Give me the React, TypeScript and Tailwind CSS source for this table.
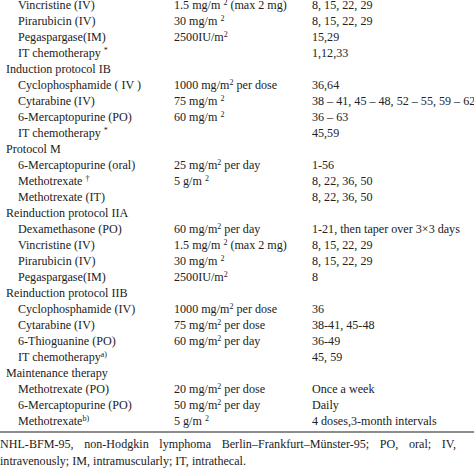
import type { ReactNode } from "react";

type Row =
  | { kind: "head"; label: string }
  | { kind: "drug"; name: ReactNode; dose?: ReactNode; days?: string };

const Sup = ({ children }: { children: ReactNode }) => (
  <sup className="text-[8px]">{children}</sup>
);

const m2 = (pre: string, post = "") => (
  <>
    {pre}
    <Sup>2</Sup>
    {post}
  </>
);

const rows: Row[] = [
  { kind: "drug", name: "Vincristine (IV)", dose: m2("1.5 mg/m ", " (max 2 mg)"), days: "8, 15, 22, 29" },
  { kind: "drug", name: "Pirarubicin (IV)", dose: m2("30 mg/m "), days: "8, 15, 22, 29" },
  { kind: "drug", name: "Pegaspargase(IM)", dose: m2("2500IU/m"), days: "15,29" },
  { kind: "drug", name: <>IT chemotherapy <Sup>*</Sup></>, days: "1,12,33" },
  { kind: "head", label: "Induction protocol IB" },
  { kind: "drug", name: "Cyclophosphamide ( IV )", dose: m2("1000 mg/m", " per dose"), days: "36,64" },
  { kind: "drug", name: "Cytarabine (IV)", dose: m2("75 mg/m "), days: "38 – 41, 45 – 48, 52 – 55, 59 – 62" },
  { kind: "drug", name: "6-Mercaptopurine (PO)", dose: m2("60 mg/m "), days: "36 – 63" },
  { kind: "drug", name: <>IT chemotherapy <Sup>*</Sup></>, days: "45,59" },
  { kind: "head", label: "Protocol M" },
  { kind: "drug", name: "6-Mercaptopurine (oral)", dose: m2("25 mg/m", " per day"), days: "1-56" },
  { kind: "drug", name: <>Methotrexate <Sup>†</Sup></>, dose: m2("5 g/m "), days: "8, 22, 36, 50" },
  { kind: "drug", name: "Methotrexate (IT)", days: "8, 22, 36, 50" },
  { kind: "head", label: "Reinduction protocol IIA" },
  { kind: "drug", name: "Dexamethasone (PO)", dose: m2("60 mg/m", " per day"), days: "1-21, then taper over 3×3 days" },
  { kind: "drug", name: "Vincristine (IV)", dose: m2("1.5 mg/m ", " (max 2 mg)"), days: "8, 15, 22, 29" },
  { kind: "drug", name: "Pirarubicin (IV)", dose: m2("30 mg/m "), days: "8, 15, 22, 29" },
  { kind: "drug", name: "Pegaspargase(IM)", dose: m2("2500IU/m"), days: "8" },
  { kind: "head", label: "Reinduction protocol IIB" },
  { kind: "drug", name: "Cyclophosphamide (IV)", dose: m2("1000 mg/m", " per dose"), days: "36" },
  { kind: "drug", name: "Cytarabine (IV)", dose: m2("75 mg/m", " per dose"), days: "38-41, 45-48" },
  { kind: "drug", name: "6-Thioguanine (PO)", dose: m2("60 mg/m", " per day"), days: "36-49" },
  { kind: "drug", name: <>IT chemotherapy<Sup>a)</Sup></>, days: "45, 59" },
  { kind: "head", label: "Maintenance therapy" },
  { kind: "drug", name: "Methotrexate (PO)", dose: m2("20 mg/m", " per dose"), days: "Once a week" },
  { kind: "drug", name: "6-Mercaptopurine (PO)", dose: m2("50 mg/m", " per day"), days: "Daily" },
  { kind: "drug", name: <>Methotrexate<Sup>b)</Sup></>, dose: m2("5 g/m "), days: "4 doses,3-month intervals" },
];

export default function App() {
  return (
    <div className="w-[474px] h-[474px] overflow-hidden bg-white text-[#222] font-['Liberation_Serif','Times_New_Roman',serif] text-[12.1px]">
      <div className="-mt-[3px] grid grid-cols-[174px_138px_1fr] leading-[16px] whitespace-nowrap">
        {rows.map((r, i) =>
          r.kind === "head" ? (
            <div key={i} className="col-span-3 pl-[6px]">
              {r.label}
            </div>
          ) : (
            <div key={i} className="contents">
              <div className="pl-[18px]">{r.name}</div>
              <div>{r.dose}</div>
              <div>{r.days}</div>
            </div>
          )
        )}
      </div>
      <div className="mt-[2px] h-[1.5px] bg-[#8c8c8c]" />
      <p className="mt-[3px] w-[456px] text-justify leading-[17px]">
        NHL-BFM-95, non-Hodgkin lymphoma Berlin–Frankfurt–Münster-95; PO, oral; IV,
        intravenously; IM, intramuscularly; IT, intrathecal.
      </p>
    </div>
  );
}
